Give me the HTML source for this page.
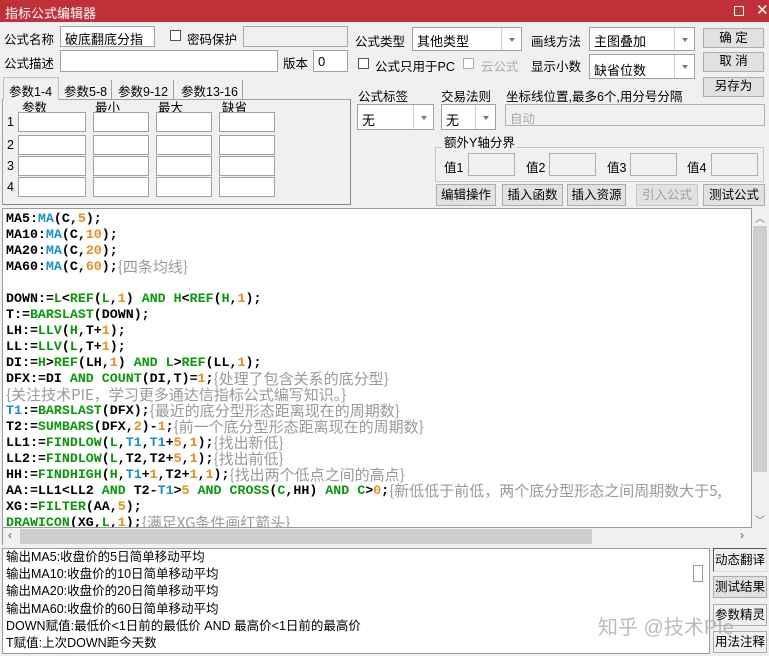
<!DOCTYPE html><html><head><meta charset="utf-8"><style>
*{box-sizing:border-box;margin:0;padding:0}
body{width:769px;height:656px;background:#f0f0f0;position:relative;overflow:hidden;font-family:"Liberation Sans","Noto Sans CJK SC",sans-serif;font-size:12px;color:#000}
.a{position:absolute;white-space:nowrap}
.in{position:absolute;background:#fff;border:1px solid #a0a0a0}
.dis{position:absolute;background:#f0f0f0;border:1px solid #c8c8c8}
.btn{position:absolute;background:#e1e1e1;border:1px solid #adadad;text-align:center;font-size:12.5px}
.cb{position:absolute;width:11px;height:11px;border:1px solid #555;background:#fff}
.cmb{position:absolute;background:#fff;border:1px solid #a0a0a0;font-size:13px;padding:3px 0 0 4px}
.cmb i{position:absolute;right:0;top:0;bottom:0;width:20px;border-left:1px solid #d0d0d0}
.cmb i:after{content:"";position:absolute;left:7px;top:45%;border:3px solid transparent;border-top:4px solid #777}
#code{position:absolute;left:2px;top:208px;width:750px;height:320px;background:#fff;border:1px solid #999;overflow:hidden;font-family:"Liberation Mono","Noto Sans CJK SC",monospace;font-weight:bold;font-size:13.3px;padding:2px 0 0 3px;white-space:pre}
#code div{height:16px;line-height:16px;overflow:visible}
.f{color:#089808}.n{color:#e09020}.b{color:#1890c0}.c{color:#999;font-weight:normal;font-family:"Noto Sans CJK SC",sans-serif;font-size:15px;line-height:16px;vertical-align:top}
#out{position:absolute;left:2px;top:548px;width:708px;height:106px;background:#fff;border:1px solid #999;font-size:12.5px;line-height:17.2px;padding:0 0 0 3px}
</style></head><body>
<div class="a" style="left:0;top:0;width:769px;height:22px;background:#bf3038"></div>
<div class="a" style="left:5px;top:3px;color:#fff;font-size:13px">指标公式编辑器</div>
<div class="a" style="left:734px;top:6px;width:10px;height:10px;border:1px solid #fff"></div>
<div class="a" style="left:756px;top:1px;color:#fff;font-size:15px">✕</div>

<div class="a" style="left:4px;top:29px;font-size:12.5px">公式名称</div>
<div class="in" style="left:60px;top:26px;width:95px;height:21px;padding:2px 4px;font-size:13px">破底翻底分指</div>
<div class="cb" style="left:170px;top:30px"></div>
<div class="a" style="left:187px;top:29px;font-size:12.5px">密码保护</div>
<div class="dis" style="left:243px;top:26px;width:105px;height:21px;border-color:#a8a8a8"></div>
<div class="a" style="left:4px;top:53px;font-size:12.5px">公式描述</div>
<div class="in" style="left:60px;top:50px;width:218px;height:22px"></div>
<div class="a" style="left:283px;top:53px;font-size:12.5px">版本</div>
<div class="in" style="left:313px;top:50px;width:35px;height:22px;padding:3px 4px;font-size:13px">0</div>

<div class="a" style="left:355px;top:31px;font-size:12.5px">公式类型</div>
<div class="cmb" style="left:412px;top:27px;width:110px;height:24px">其他类型<i></i></div>
<div class="a" style="left:531px;top:31px;font-size:12.5px">画线方法</div>
<div class="cmb" style="left:589px;top:27px;width:106px;height:24px">主图叠加<i></i></div>
<div class="cb" style="left:358px;top:58px"></div>
<div class="a" style="left:375px;top:56px;font-size:12.5px">公式只用于PC</div>
<div class="cb" style="left:463px;top:58px;border-color:#aaa"></div>
<div class="a" style="left:481px;top:56px;font-size:12.5px;color:#aaa">云公式</div>
<div class="a" style="left:531px;top:56px;font-size:12.5px">显示小数</div>
<div class="cmb" style="left:589px;top:54px;width:106px;height:25px;padding-top:5px">缺省位数<i></i></div>
<div class="btn" style="left:703px;top:28px;width:61px;height:20px;line-height:18px">确 定</div>
<div class="btn" style="left:703px;top:52px;width:61px;height:20px;line-height:17px">取 消</div>
<div class="btn" style="left:703px;top:77px;width:61px;height:20px;line-height:17px">另存为</div>

<div class="a" style="left:2px;top:99px;width:349px;height:106px;border:1px solid #a0a0a0;border-right-color:#888;border-bottom-color:#888"></div>
<div class="a" style="left:3px;top:77px;width:56px;height:23px;background:#f0f0f0;border:1px solid #c0c0c0;border-bottom:none;padding:3px 0 0 5px;font-size:12.5px">参数1-4</div>
<div class="a" style="left:59px;top:80px;width:53px;height:19px;border-right:1px solid #a0a0a0;padding:1px 0 0 5px;font-size:12.5px">参数5-8</div>
<div class="a" style="left:112px;top:80px;width:62px;height:19px;border-right:1px solid #a0a0a0;padding:1px 0 0 6px;font-size:12.5px">参数9-12</div>
<div class="a" style="left:174px;top:80px;width:69px;height:19px;border-right:1px solid #a0a0a0;padding:1px 0 0 7px;font-size:12.5px">参数13-16</div>
<div class="a" style="left:22px;top:97px;font-size:12.5px">参数</div>
<div class="a" style="left:95px;top:97px;font-size:12.5px">最小</div>
<div class="a" style="left:158px;top:97px;font-size:12.5px">最大</div>
<div class="a" style="left:222px;top:97px;font-size:12.5px">缺省</div>
<div class="a" style="left:7px;top:115px;font-size:12.5px">1</div>
<div class="a" style="left:7px;top:138px;font-size:12.5px">2</div>
<div class="a" style="left:7px;top:159px;font-size:12.5px">3</div>
<div class="a" style="left:7px;top:180px;font-size:12.5px">4</div>
<div class="in" style="left:18px;top:112px;width:68px;height:20px"></div><div class="in" style="left:93px;top:112px;width:56px;height:20px"></div><div class="in" style="left:156px;top:112px;width:56px;height:20px"></div><div class="in" style="left:219px;top:112px;width:56px;height:20px"></div>
<div class="in" style="left:18px;top:135px;width:68px;height:20px"></div><div class="in" style="left:93px;top:135px;width:56px;height:20px"></div><div class="in" style="left:156px;top:135px;width:56px;height:20px"></div><div class="in" style="left:219px;top:135px;width:56px;height:20px"></div>
<div class="in" style="left:18px;top:156px;width:68px;height:20px"></div><div class="in" style="left:93px;top:156px;width:56px;height:20px"></div><div class="in" style="left:156px;top:156px;width:56px;height:20px"></div><div class="in" style="left:219px;top:156px;width:56px;height:20px"></div>
<div class="in" style="left:18px;top:177px;width:68px;height:20px"></div><div class="in" style="left:93px;top:177px;width:56px;height:20px"></div><div class="in" style="left:156px;top:177px;width:56px;height:20px"></div><div class="in" style="left:219px;top:177px;width:56px;height:20px"></div>

<div class="a" style="left:358px;top:86px;font-size:12.5px">公式标签</div>
<div class="cmb" style="left:357px;top:104px;width:77px;height:26px;padding-top:5px">无<i></i></div>
<div class="a" style="left:441px;top:86px;font-size:12.5px">交易法则</div>
<div class="cmb" style="left:441px;top:104px;width:55px;height:26px;padding-top:5px">无<i></i></div>
<div class="a" style="left:506px;top:86px;font-size:12.5px">坐标线位置,最多6个,用分号分隔</div>
<div class="dis" style="left:505px;top:104px;width:260px;height:22px;border-color:#b0b0b0;color:#aaa;padding:3px 4px;font-size:12.5px">自动</div>
<div class="a" style="left:435px;top:147px;width:329px;height:35px;border:1px solid #c8c8c8"></div>
<div class="a" style="left:442px;top:132px;font-size:12.5px;background:#f0f0f0;padding:0 2px">额外Y轴分界</div>
<div class="a" style="left:444px;top:157px;font-size:12.5px">值1</div><div class="dis" style="left:468px;top:153px;width:47px;height:23px;border-color:#b0b0b0"></div>
<div class="a" style="left:526px;top:157px;font-size:12.5px">值2</div><div class="dis" style="left:549px;top:153px;width:47px;height:23px;border-color:#b0b0b0"></div>
<div class="a" style="left:607px;top:157px;font-size:12.5px">值3</div><div class="dis" style="left:630px;top:153px;width:47px;height:23px;border-color:#b0b0b0"></div>
<div class="a" style="left:687px;top:157px;font-size:12.5px">值4</div><div class="dis" style="left:711px;top:153px;width:47px;height:23px;border-color:#b0b0b0"></div>
<div class="btn" style="left:436px;top:184px;width:60px;height:22px;line-height:20px">编辑操作</div>
<div class="btn" style="left:502px;top:184px;width:61px;height:22px;line-height:20px">插入函数</div>
<div class="btn" style="left:567px;top:184px;width:59px;height:22px;line-height:20px">插入资源</div>
<div class="btn" style="left:636px;top:184px;width:62px;height:22px;line-height:20px;color:#a0a0a0;border-color:#c8c8c8">引入公式</div>
<div class="btn" style="left:703px;top:184px;width:62px;height:22px;line-height:20px">测试公式</div>

<div id="code"><div>MA5:<span class="b">MA</span>(C,<span class="n">5</span>);</div><div>MA10:<span class="b">MA</span>(C,<span class="n">10</span>);</div><div>MA20:<span class="b">MA</span>(C,<span class="n">20</span>);</div><div>MA60:<span class="b">MA</span>(C,<span class="n">60</span>);<span class="c">{四条均线}</span></div><div></div><div>DOWN:=<span class="f">L</span>&lt;<span class="f">REF</span>(<span class="f">L</span>,<span class="n">1</span>) <span class="f">AND</span> <span class="f">H</span>&lt;<span class="f">REF</span>(<span class="f">H</span>,<span class="n">1</span>);</div><div>T:=<span class="f">BARSLAST</span>(DOWN);</div><div>LH:=<span class="f">LLV</span>(<span class="f">H</span>,T+<span class="n">1</span>);</div><div>LL:=<span class="f">LLV</span>(<span class="f">L</span>,T+<span class="n">1</span>);</div><div>DI:=<span class="f">H</span>&gt;<span class="f">REF</span>(LH,<span class="n">1</span>) <span class="f">AND</span> <span class="f">L</span>&gt;<span class="f">REF</span>(LL,<span class="n">1</span>);</div><div>DFX:=DI <span class="f">AND</span> <span class="f">COUNT</span>(DI,T)=<span class="n">1</span>;<span class="c">{处理了包含关系的底分型}</span></div><div><span class="c">{关注技术PIE，学习更多通达信指标公式编写知识。}</span></div><div><span class="b">T1</span>:=<span class="f">BARSLAST</span>(DFX);<span class="c">{最近的底分型形态距离现在的周期数}</span></div><div>T2:=<span class="f">SUMBARS</span>(DFX,<span class="n">2</span>)-<span class="n">1</span>;<span class="c">{前一个底分型形态距离现在的周期数}</span></div><div>LL1:=<span class="f">FINDLOW</span>(<span class="f">L</span>,<span class="b">T1</span>,<span class="b">T1</span>+<span class="n">5</span>,<span class="n">1</span>);<span class="c">{找出新低}</span></div><div>LL2:=<span class="f">FINDLOW</span>(<span class="f">L</span>,T2,T2+<span class="n">5</span>,<span class="n">1</span>);<span class="c">{找出前低}</span></div><div>HH:=<span class="f">FINDHIGH</span>(<span class="f">H</span>,<span class="b">T1</span>+<span class="n">1</span>,T2+<span class="n">1</span>,<span class="n">1</span>);<span class="c">{找出两个低点之间的高点}</span></div><div>AA:=LL1&lt;LL2 <span class="f">AND</span> T2-<span class="b">T1</span>&gt;<span class="n">5</span> <span class="f">AND</span> <span class="f">CROSS</span>(<span class="f">C</span>,HH) <span class="f">AND</span> <span class="f">C</span>&gt;<span class="n">0</span>;<span class="c">{新低低于前低，两个底分型形态之间周期数大于5,</span></div><div>XG:=<span class="f">FILTER</span>(AA,<span class="n">5</span>);</div><div><span class="f">DRAWICON</span>(XG,<span class="f">L</span>,<span class="n">1</span>);<span class="c">{满足XG条件画红箭头}</span></div></div>
<div class="a" style="left:752px;top:208px;width:16px;height:320px;background:#f0f0f0"></div>
<div class="a" style="left:753px;top:226px;width:14px;height:246px;background:#cdcdcd"></div>
<div class="a" style="left:755px;top:210px;color:#666;font-size:10px">︿</div>
<div class="a" style="left:755px;top:512px;color:#666;font-size:10px">﹀</div>
<div class="a" style="left:2px;top:528px;width:750px;height:17px;background:#f0f0f0;border-left:1px solid #999"></div>
<div class="a" style="left:20px;top:529px;width:572px;height:15px;background:#cdcdcd"></div>
<div class="a" style="left:8px;top:528px;color:#555;font-size:12px">‹</div>
<div class="a" style="left:740px;top:528px;color:#555;font-size:12px">›</div>

<div id="out">输出MA5:收盘价的5日简单移动平均<br>输出MA10:收盘价的10日简单移动平均<br>输出MA20:收盘价的20日简单移动平均<br>输出MA60:收盘价的60日简单移动平均<br>DOWN赋值:最低价&lt;1日前的最低价 AND 最高价&lt;1日前的最高价<br>T赋值:上次DOWN距今天数</div>
<div class="a" style="left:693px;top:565px;width:10px;height:17px;border:1px solid #999;background:#fff"></div>
<div class="a" style="left:598px;top:611px;color:#bbb;font-size:20px">知乎 @技术PIe</div>
<div class="btn" style="left:713px;top:548px;width:54px;height:24px;line-height:22px;border-color:#555 #ddd #ddd #555;background:#f0f0f0">动态翻译</div>
<div class="btn" style="left:713px;top:576px;width:54px;height:22px;line-height:20px">测试结果</div>
<div class="btn" style="left:713px;top:604px;width:54px;height:22px;line-height:20px;background:transparent">参数精灵</div>
<div class="btn" style="left:713px;top:631px;width:54px;height:22px;line-height:20px;background:transparent">用法注释</div>
</body></html>
